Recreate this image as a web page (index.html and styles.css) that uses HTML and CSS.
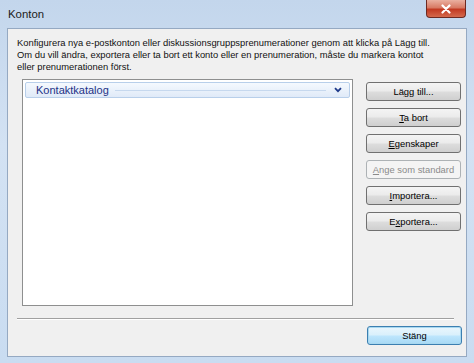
FILE: index.html
```html
<!DOCTYPE html>
<html>
    <head>
        <title>Konton</title>
        <link rel="stylesheet" href="styles.css">
    </head>
    <body>
        <div class="window">
            <div class="titlebar">
                <span class="title">Konton</span>
                <div class="close">
                    <svg width="12" height="10" viewBox="0 0 12 10">
                        <path d="M2.5 1.5 L9.5 8.5 M9.5 1.5 L2.5 8.5" stroke="#fff" stroke-width="2.2" stroke-linecap="round"/>
                    </svg>
                </div>
            </div>
            <div class="client">
                <p class="intro">Konfigurera nya e-postkonton eller diskussionsgruppsprenumerationer genom att klicka på Lägg till.<br>Om du vill ändra, exportera eller ta bort ett konto eller en prenumeration, måste du markera kontot<br>eller prenumerationen först.</p>
                <div class="main">
                    <div class="listbox">
                        <div class="group">
                            <span class="group-name">Kontaktkatalog</span>
                            <span class="group-line"></span>
                            <svg class="chevron" width="8" height="6" viewBox="0 0 8 6">
                                <path d="M1 1.2 L4 4.2 L7 1.2" stroke="#1e3a8a" stroke-width="1.8" fill="none"/>
                            </svg>
                        </div>
                    </div>
                    <div class="actions">
                        <button class="btn">Lä<u>g</u>g till...</button>
                        <button class="btn"><u>T</u>a bort</button>
                        <button class="btn"><u>E</u>genskaper</button>
                        <button class="btn" disabled><u>A</u>nge som standard</button>
                        <button class="btn"><u>I</u>mportera...</button>
                        <button class="btn">E<u>x</u>portera...</button>
                    </div>
                </div>
                <div class="separator"></div>
                <div class="footer">
                    <button class="btn default">Stäng</button>
                </div>
            </div>
        </div>
    </body>
</html>
```
FILE: styles.css
```css
html, body{
    margin: 0;
    padding: 0;
    width: 474px;
    height: 363px;
    overflow: hidden;
}
body{
    font-family: "Liberation Sans", Arial, sans-serif;
    font-size: 9.4px;
    color: #000;
}
.window{
    height: 363px;
    box-sizing: border-box;
    padding: 0 7px 6px 7px;
    display: flex;
    flex-direction: column;
    background: linear-gradient(to bottom, #c3d6ec 0%, #d3e2f3 40%, #c9dcf1 100%);
}
.titlebar{
    height: 28px;
    display: flex;
    align-items: flex-start;
}
.title{
    margin-top: 8px;
    margin-left: 1px;
    font-size: 11.4px;
    color: #1b1b1b;
}
.close{
    margin-left: auto;
    margin-right: 1px;
    width: 40px;
    height: 18px;
    box-sizing: border-box;
    border: 1px solid #6d2a22;
    border-top: 0;
    border-radius: 0 0 4px 4px;
    background: linear-gradient(to bottom, #eab0a0 0%, #d87a64 45%, #c23a22 55%, #d4694c 100%);
    display: flex;
    align-items: center;
    justify-content: center;
}
.client{
    flex: 1;
    background: #f0f0f0;
    border: 1px solid #95a9c2;
    padding: 8px 0 0 9px;
    display: flex;
    flex-direction: column;
}
.intro{
    margin: 0;
    line-height: 12px;
    white-space: nowrap;
    color: #111;
}
.main{
    display: flex;
    margin-top: 6px;
    margin-left: 5px;
}
.listbox{
    width: 331px;
    height: 227px;
    box-sizing: border-box;
    border: 1px solid #8e8f8f;
    background: #fff;
    padding: 2px;
}
.group{
    height: 16px;
    box-sizing: border-box;
    border: 1px solid #b8cfea;
    border-radius: 2px;
    background: linear-gradient(to bottom, #f5f9fe 0%, #e0eaf8 100%);
    display: flex;
    align-items: center;
    padding-left: 10px;
    padding-right: 7px;
}
.group-name{
    color: #1e3287;
    font-size: 11px;
    line-height: 13px;
}
.group-line{
    flex: 1;
    height: 1px;
    background: #c6d8ee;
    margin: 0 8px 0 6px;
}
.actions{
    display: flex;
    flex-direction: column;
    gap: 7px;
    margin-left: 13px;
    margin-top: 3px;
}
.btn{
    width: 95px;
    height: 19px;
    box-sizing: border-box;
    border: 1px solid #707070;
    border-radius: 3px;
    background: linear-gradient(to bottom, #f4f4f4 0%, #ebebeb 48%, #dddddd 52%, #cfcfcf 100%);
    font-family: "Liberation Sans", Arial, sans-serif;
    font-size: 9.4px;
    color: #000;
    padding: 0;
    line-height: 16px;
}
.btn:disabled{
    border-color: #adb2b5;
    background: #f4f4f4;
    color: #8b8b8b;
}
.separator{
    height: 1px;
    background: #a0a0a0;
    border-bottom: 1px solid #fff;
    margin-top: 12px;
    width: 437px;
}
.footer{
    display: flex;
    justify-content: flex-end;
    margin-top: 6px;
    padding-right: 4px;
}
.btn.default{
    border-color: #3c7fb1;
    box-shadow: inset 0 0 0 1px #a8d8f0;
    background: linear-gradient(to bottom, #eaf6fd 0%, #d9f0fc 48%, #bee6fd 52%, #a7d9f5 100%);
}
```
